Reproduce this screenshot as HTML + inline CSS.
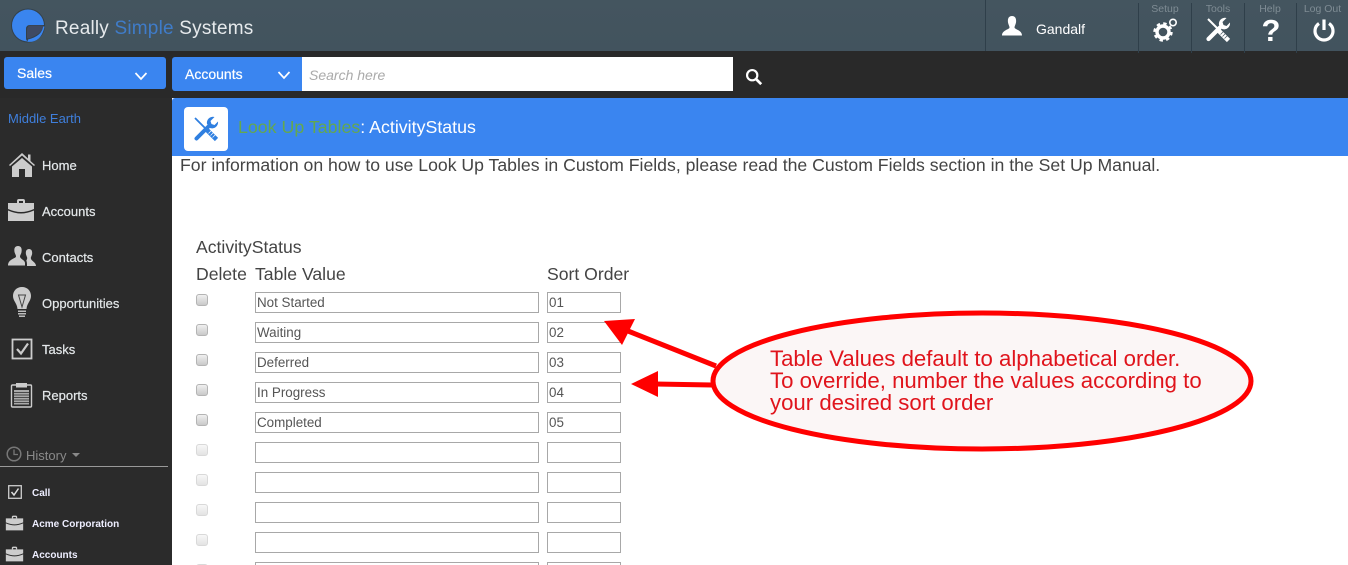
<!DOCTYPE html>
<html><head><meta charset="utf-8"><style>
html,body{margin:0;padding:0;width:1348px;height:565px;overflow:hidden}
#w{position:relative;width:1348px;height:565px;overflow:hidden;background:#fff;font-family:"Liberation Sans",Arial,sans-serif}
.a{position:absolute;white-space:nowrap}
svg{position:absolute;overflow:visible}
.nav{position:absolute;left:42px;color:#e4e8ea;font-size:13px;line-height:16px;-webkit-text-stroke:.2px #e4e8ea}
.hist{position:absolute;left:32px;color:#eef;font-size:10px;font-weight:bold;line-height:12px}
.sep{position:absolute;top:3px;width:1px;height:50px;background:#2f3f4a}
.lab{position:absolute;top:3px;font-size:10.5px;line-height:12px;color:#7f8c94;text-align:center}
.i1,.i2{position:absolute;box-sizing:border-box;height:21px;border:1px solid #a8a8a8;background:#fff;font-size:13.4px;line-height:19px;color:#555;padding-left:1px}
.i1{left:255px;width:284px}
.i2{left:547px;width:74px}
.c{position:absolute;left:196px;width:12px;height:12px;box-sizing:border-box;border:1px solid #b4b4b4;border-radius:3px;background:linear-gradient(#f0f0f0,#c9c9c9)}
.c.l{opacity:.5}
.h{position:absolute;font-size:17.6px;line-height:20px;color:#444}
</style></head><body><div id="w">
<div class="a" style="left:0;top:0;width:1348px;height:51px;background:linear-gradient(#44555f,#42535e)"></div>
<div class="a" style="left:0;top:51px;width:1348px;height:47px;background:#292929"></div>
<div class="a" style="left:0;top:98px;width:172px;height:467px;background:#2b2b2b"></div>

<svg style="left:0;top:0" width="60" height="50" viewBox="0 0 60 50">
<circle cx="28" cy="25.500" r="17" fill="#33404a"/>
<path d="M28 9.500A16 16 0 1 0 28 41.500C28 41.500 26 41 26 38V29Q26 25 30 25H44A16 16 0 0 0 28 9.500Z" fill="#3a85ef"/>
<path d="M27.500 41.800Q40 43 44 29L44.500 26.500H43Q42 36 28 39.500Z" fill="#3a85ef"/>
<path d="M27 38V30Q27 25.500 31 25.500H43Q43.500 33 29 38.500Z" fill="#3f4a63"/>
</svg>
<div class="a" style="left:55px;top:16px;font-size:19px;line-height:26px;color:#e6eaec;letter-spacing:.2px">Really <span style="color:#3f7cc9">Simple</span> Systems</div>

<div class="sep" style="left:985px;top:0;height:51px"></div>
<div class="sep" style="left:1138px"></div><div class="sep" style="left:1191px"></div><div class="sep" style="left:1244px"></div><div class="sep" style="left:1296px"></div>
<svg style="left:1000px;top:14px" width="24" height="24" viewBox="0 0 24 24"><path d="M12 2C8.500 2 7.500 5 8 8.500C8.300 10.500 9.500 12 9.500 13.500C9.500 15.500 2 16 2 21.500H22C22 16 14.500 15.500 14.500 13.500C14.500 12 15.700 10.500 16 8.500C16.500 5 15.500 2 12 2Z" fill="#fff"/></svg>
<div class="a" style="left:1036px;top:21px;font-size:14px;line-height:16px;color:#fff">Gandalf</div>
<div class="lab" style="left:1139px;width:52px">Setup</div>
<div class="lab" style="left:1192px;width:52px">Tools</div>
<div class="lab" style="left:1245px;width:50px">Help</div>
<div class="lab" style="left:1297px;width:51px">Log Out</div>
<svg style="left:1150px;top:17px" width="30" height="26" viewBox="0 0 30 26">
<circle cx="13" cy="15" r="6" fill="none" stroke="#fff" stroke-width="3.400"/>
<circle cx="13" cy="15" r="8.500" fill="none" stroke="#fff" stroke-width="2.400" stroke-dasharray="3.400 3.270"/>
<circle cx="23" cy="5.500" r="3.200" fill="none" stroke="#fff" stroke-width="1.600"/>
</svg>
<svg style="left:1205px;top:17px" width="26" height="26" viewBox="0 0 26 26">
<path d="M3 2L13 12" stroke="#fff" stroke-width="2" fill="none"/>
<path d="M14 14L23.500 23.500" stroke="#fff" stroke-width="4.500" fill="none"/>
<path d="M15.500 17.500L19 14M17.500 19.500L21 16M19.500 21.500L23 18" stroke="#42535e" stroke-width=".7" fill="none"/>
<path d="M3.500 22L15 10.500" stroke="#fff" stroke-width="4.200" stroke-linecap="round" fill="none"/>
<path d="M14 8A6 6 0 0 1 21.500 1L17.500 5L18.500 8L21.500 9L25 5.500A6 6 0 0 1 17 12Z" fill="#fff"/>
</svg>
<div class="a" style="left:1260px;top:14px;width:22px;text-align:center;font-size:31px;font-weight:bold;line-height:34px;color:#fff">?</div>
<svg style="left:1312px;top:18px" width="24" height="24" viewBox="0 0 24 24"><path d="M7 5.500A9 9 0 1 0 17 5.500" fill="none" stroke="#fff" stroke-width="3.200"/><path d="M12 1.500V12" stroke="#fff" stroke-width="3.200"/></svg>

<div class="a" style="left:4px;top:57px;width:162px;height:32px;background:#3a85f0;border-radius:3px"></div>
<div class="a" style="left:17px;top:65px;font-size:14px;line-height:16px;color:#fff;-webkit-text-stroke:.2px #fff">Sales</div>
<svg style="left:134px;top:71px" width="14" height="10" viewBox="0 0 14 10"><path d="M1.500 2L7 8L12.500 2" fill="none" stroke="#fff" stroke-width="1.700"/></svg>
<div class="a" style="left:172px;top:57px;width:130px;height:34px;background:#3a85f0;border-radius:3px 0 0 3px"></div>
<div class="a" style="left:185px;top:66px;font-size:14px;line-height:16px;color:#fff;-webkit-text-stroke:.2px #fff">Accounts</div>
<svg style="left:277px;top:70px" width="14" height="10" viewBox="0 0 14 10"><path d="M1.500 2L7 8L12.500 2" fill="none" stroke="#fff" stroke-width="1.700"/></svg>
<div class="a" style="left:302px;top:57px;width:431px;height:34px;background:#fff"></div>
<div class="a" style="left:309px;top:67px;font-size:14px;font-style:italic;line-height:16px;color:#aaa">Search here</div>
<svg style="left:745px;top:68px" width="18" height="18" viewBox="0 0 20 20"><circle cx="8" cy="8" r="5.700" fill="none" stroke="#fff" stroke-width="2.400"/><path d="M12.500 12.500L18 18" stroke="#fff" stroke-width="3"/></svg>

<div class="a" style="left:8px;top:111px;font-size:13px;line-height:16px;color:#3f7fdc">Middle Earth</div>

<svg style="left:8px;top:152px" width="28" height="26" viewBox="0 0 28 26"><path d="M1 13L14 1L20 6.500V2.500H22.500V9L27 13L26 14L14 3.500L2 14Z" fill="#ccc"/><path d="M4 14.500L14 6L24 14.500V25H17V17H11V25H4Z" fill="#ccc"/></svg>
<div class="nav" style="top:158px">Home</div>
<svg style="left:7px;top:198px" width="28" height="24" viewBox="0 0 28 24"><path d="M10 5V3Q10 1 12 1H16Q18 1 18 3V5H16V3H12V5Z" fill="#ccc"/><path d="M1 5H27V11Q20 14 14 14Q8 14 1 11Z" fill="#ccc"/><path d="M1 12.500Q8 15.500 14 15.500Q20 15.500 27 12.500V23H1Z" fill="#ccc"/></svg>
<div class="nav" style="top:204px">Accounts</div>
<svg style="left:7px;top:245px" width="30" height="22" viewBox="0 0 30 22"><path d="M11 1C7.500 1 7 4 7.500 7C8 9 9 10 9 11.500C9 13.500 1 14 1 20.500H18V18C18 15 13 14 13 11.500C13 10 14.300 9 14.500 7C15 4 14.500 1 11 1Z" fill="#ccc"/><path d="M22 4C19 4 18.500 7 19 9.500C19.400 11 20.200 12 20.200 13C20.200 15 19 15 19.500 16C20 17.500 20 19 20 21H29C29 17 23.800 16 23.800 13C23.800 12 24.600 11 25 9.500C25.500 7 25 4 22 4Z" fill="#ccc"/></svg>
<div class="nav" style="top:250px">Contacts</div>
<svg style="left:11px;top:286px" width="22" height="32" viewBox="0 0 22 32"><path d="M11 1C5.500 1 2 5 2 10C2 15 6 17 6.500 23H15.500C16 17 20 15 20 10C20 5 16.500 1 11 1Z" fill="#ccc"/><path d="M7.500 9H14.500L11 21L7.500 9Z" fill="none" stroke="#444" stroke-width="1"/><path d="M7 24.500H15V26H7ZM7 27H15V28.500H7ZM8 29.500H14V31H8Z" fill="#bbb"/></svg>
<div class="nav" style="top:296px">Opportunities</div>
<svg style="left:11px;top:338px" width="24" height="22" viewBox="0 0 24 22"><rect x="1.500" y="1.500" width="19" height="19" fill="none" stroke="#ccc" stroke-width="1.800"/><path d="M6 11L10 15.500L17 5.500" fill="none" stroke="#ccc" stroke-width="2.200"/></svg>
<div class="nav" style="top:342px">Tasks</div>
<svg style="left:10px;top:382px" width="24" height="26" viewBox="0 0 24 26"><rect x="1.500" y="3" width="20" height="22" rx="1" fill="none" stroke="#ccc" stroke-width="1.400"/><rect x="6" y="1" width="11" height="4.500" fill="#ccc"/><path d="M4 8H19V22.500H4Z" fill="#aaa"/><path d="M4 10.500H19M4 13H19M4 15.500H19M4 18H19M4 20.500H19" stroke="#2b2b2b" stroke-width=".7"/></svg>
<div class="nav" style="top:388px">Reports</div>

<svg style="left:6px;top:446px" width="17" height="17" viewBox="0 0 17 17"><circle cx="8" cy="8" r="6.800" fill="none" stroke="#777" stroke-width="1.500"/><path d="M8 3.500V8.500H12" fill="none" stroke="#777" stroke-width="1.300"/></svg>
<div class="a" style="left:26px;top:448px;font-size:13px;line-height:16px;color:#8a8a8a">History</div>
<svg style="left:72px;top:453px" width="9" height="5" viewBox="0 0 9 5"><path d="M0 0H8L4 4Z" fill="#8a8a8a"/></svg>
<div class="a" style="left:0;top:466px;width:168px;height:1px;background:#999"></div>
<svg style="left:8px;top:485px" width="14" height="14" viewBox="0 0 14 14"><rect x=".7" y=".7" width="12.600" height="12.600" fill="none" stroke="#ccc" stroke-width="1.300"/><path d="M3.500 7L6 10L10.500 3.500" fill="none" stroke="#ddd" stroke-width="1.500"/></svg>
<div class="hist" style="top:488px">Call</div>
<svg style="left:5px;top:515px" width="19" height="16" viewBox="0 0 28 24"><path d="M10 5V3Q10 1 12 1H16Q18 1 18 3V5H16V3H12V5Z" fill="#ccc"/><path d="M1 5H27V11Q20 14 14 14Q8 14 1 11Z" fill="#ccc"/><path d="M1 12.500Q8 15.500 14 15.500Q20 15.500 27 12.500V23H1Z" fill="#ccc"/></svg>
<div class="hist" style="top:519px">Acme Corporation</div>
<svg style="left:5px;top:546px" width="19" height="16" viewBox="0 0 28 24"><path d="M10 5V3Q10 1 12 1H16Q18 1 18 3V5H16V3H12V5Z" fill="#ccc"/><path d="M1 5H27V11Q20 14 14 14Q8 14 1 11Z" fill="#ccc"/><path d="M1 12.500Q8 15.500 14 15.500Q20 15.500 27 12.500V23H1Z" fill="#ccc"/></svg>
<div class="hist" style="top:550px">Accounts</div>

<div class="a" style="left:172px;top:98px;width:1176px;height:58px;background:#3a85f0;border-radius:3px 0 0 0"></div>
<div class="a" style="left:184px;top:107px;width:44px;height:44px;background:#fff;border-radius:4px"></div>
<svg style="left:193px;top:116px" width="26" height="26" viewBox="0 0 26 26">
<path d="M2 2L13 13" stroke="#2f7fe0" stroke-width="1.800" fill="none"/>
<path d="M13.500 13.500L23.500 23.500" stroke="#2f7fe0" stroke-width="4.500" fill="none"/>
<path d="M15.500 17.500L19 14M17.500 19.500L21 16M19.500 21.500L23 18" stroke="#fff" stroke-width=".7" fill="none"/>
<path d="M3.500 22.500L15 11" stroke="#2f7fe0" stroke-width="4" stroke-linecap="round" fill="none"/>
<path d="M14 8A6 6 0 0 1 21.500 1L17.500 5L18.500 8L21.500 9L25 5.500A6 6 0 0 1 17 12Z" fill="#2f7fe0"/>
</svg>
<div class="a" style="left:238px;top:117px;font-size:17.8px;line-height:20px;color:#fff"><span style="color:#64a84e">Look Up Tables</span>: ActivityStatus</div>
<div class="a" style="left:180px;top:155px;font-size:17.65px;line-height:20px;color:#444">For information on how to use Look Up Tables in Custom Fields, please read the Custom Fields section in the Set Up Manual.</div>

<div class="h" style="left:196px;top:237px">ActivityStatus</div>
<div class="h" style="left:196px;top:264px">Delete</div>
<div class="h" style="left:255px;top:264px">Table Value</div>
<div class="h" style="left:547px;top:264px">Sort Order</div>

<div class="c" style="top:294px"></div><div class="i1" style="top:292px">Not Started</div><div class="i2" style="top:292px">01</div>
<div class="c" style="top:324px"></div><div class="i1" style="top:322px">Waiting</div><div class="i2" style="top:322px">02</div>
<div class="c" style="top:354px"></div><div class="i1" style="top:352px">Deferred</div><div class="i2" style="top:352px">03</div>
<div class="c" style="top:384px"></div><div class="i1" style="top:382px">In Progress</div><div class="i2" style="top:382px">04</div>
<div class="c" style="top:414px"></div><div class="i1" style="top:412px">Completed</div><div class="i2" style="top:412px">05</div>
<div class="c l" style="top:444px"></div><div class="i1" style="top:442px"></div><div class="i2" style="top:442px"></div>
<div class="c l" style="top:474px"></div><div class="i1" style="top:472px"></div><div class="i2" style="top:472px"></div>
<div class="c l" style="top:504px"></div><div class="i1" style="top:502px"></div><div class="i2" style="top:502px"></div>
<div class="c l" style="top:534px"></div><div class="i1" style="top:532px"></div><div class="i2" style="top:532px"></div>
<div class="c l" style="top:564px"></div><div class="i1" style="top:562px"></div><div class="i2" style="top:562px"></div>

<svg style="left:0;top:0" width="1348" height="565" viewBox="0 0 1348 565">
<path d="M716 366L628 331" stroke="#f00" stroke-width="5" fill="none"/>
<path d="M604 321L635 319L622 345Z" fill="#f00"/>
<path d="M712 385L655 384" stroke="#f00" stroke-width="5" fill="none"/>
<path d="M631 384L658 371V397Z" fill="#f00"/>
<ellipse cx="982" cy="381" rx="269" ry="68" fill="#fbf6f6" stroke="#f00" stroke-width="5"/>
</svg>
<div class="a" style="left:770px;top:348px;font-size:22.2px;line-height:22px;color:#e0141c">Table Values default to alphabetical order.<br>To override, number the values according to<br>your desired sort order</div>
</div></body></html>
